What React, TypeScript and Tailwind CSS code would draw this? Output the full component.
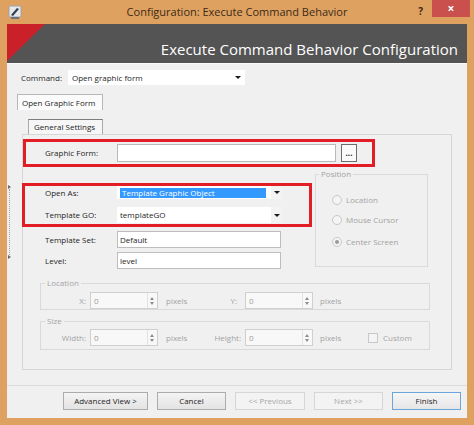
import React from 'react';

const Down = ({ dim = false }: { dim?: boolean }) => (
  <div className={`h-0 w-0 border-x-[3px] border-t-[3px] border-x-transparent ${dim ? 'border-t-[#9a9a9a]' : 'border-t-[#1a1a1a]'}`} />
);

const SpinArrows = () => (
  <div className="flex h-full w-[9px] flex-col items-center justify-center gap-[2px] border-l border-[#e2e2e2]">
    <div className="h-0 w-0 border-x-[2.5px] border-b-[3px] border-x-transparent border-b-[#8c8c8c]" />
    <div className="h-0 w-0 border-x-[2.5px] border-t-[3px] border-x-transparent border-t-[#8c8c8c]" />
  </div>
);

const Spin = () => (
  <div className="flex h-[17px] w-[68px] items-center border border-[#cfcfcf] bg-[#f8f8f8] pr-px">
    <span className="flex-1 pl-[3px] text-[#9c9c9c]">0</span>
    <SpinArrows />
  </div>
);

const Radio = ({ label, checked = false, mt }: { label: string; checked?: boolean; mt: string }) => (
  <div className={`flex h-[12px] items-center pl-[16px] ${mt}`}>
    <div className="flex h-[10px] w-[10px] items-center justify-center rounded-full border border-[#c8c8c8] bg-[#f4f4f4]">
      {checked && <div className="h-[4px] w-[4px] rounded-full bg-[#9a9a9a]" />}
    </div>
    <span className="ml-[4px] text-[#a3a3a3]">{label}</span>
  </div>
);

const Btn = ({ label, w, dim = false, focus = false }: { label: string; w: string; dim?: boolean; focus?: boolean }) => (
  <div
    className={`flex h-[18px] items-center justify-center border ${w} ${
      dim
        ? 'border-[#d6d6d6] bg-[#f3f3f3] text-[#a6a6a6]'
        : focus
          ? 'border-[#6aa6dc] bg-linear-to-b from-[#f6f6f6] to-[#e6e6e6] text-[#1e1e1e]'
          : 'border-[#acacac] bg-linear-to-b from-[#f4f4f4] to-[#e3e3e3] text-[#1e1e1e]'
    }`}
  >
    {label}
  </div>
);

export default function App() {
  return (
    <div className="flex h-[425px] w-[474px] flex-col bg-[#dfa160] font-['Open_Sans',sans-serif] text-[8px] leading-[10px] text-[#1e1e1e]">
      {/* title bar */}
      <div className="grid h-[24px] grid-cols-[1fr_auto_1fr] items-center">
        <div className="pl-[8px]">
          <svg width="14" height="14" viewBox="0 0 14 14">
            <rect x="1" y="1" width="12" height="11" rx="1" fill="#e8e8e8" stroke="#9aa3ad" />
            <path d="M3 10 L9 3 L11 4 L5 11 Z" fill="#2c3e58" />
            <rect x="3" y="12" width="8" height="2" fill="#6b7280" />
          </svg>
        </div>
        <div className="text-[11px] leading-[14px] text-[#3a2a18]">Configuration: Execute Command Behavior</div>
        <div className="flex h-full items-start justify-end">
          <span className="mt-[6px] mr-[9px] text-[10px] font-bold text-[#3a2a18]">?</span>
          <div className="mr-[4px] flex h-[17px] w-[38px] items-center justify-center bg-[#c9504d] text-[12px] font-bold text-white">
            ×
          </div>
        </div>
      </div>

      <div className="mx-[7px] mb-[7px] flex flex-1 flex-col bg-[#f0f0f0]">
        {/* header */}
        <div className="flex h-[40px] border-b border-[#fafafa] bg-[#545454]">
          <div className="h-full w-[38px] bg-[#c9202a] [clip-path:polygon(0_0,100%_0,0_95%)]" />
          <div className="flex flex-1 items-end justify-end pr-[9px] pb-[4px] text-[15px] leading-[20px] text-white">
            Execute Command Behavior Configuration
          </div>
        </div>

        <div className="flex h-[320px]">
          {/* splitter */}
          <div className="flex w-[5px] flex-col items-center">
            <div className="mt-[121px] h-0 w-0 border-y-[2.5px] border-l-[3px] border-y-transparent border-l-[#6b6b6b]" />
            <div className="h-[66px] border-l border-dotted border-[#a0a0a0]" />
            <div className="h-0 w-0 border-y-[2.5px] border-l-[3px] border-y-transparent border-l-[#6b6b6b]" />
          </div>

          <div className="flex flex-1 flex-col">
            {/* command */}
            <div className="mt-[6px] flex h-[15px] items-center">
              <span className="ml-[9px] w-[47px]">Command:</span>
              <div className="flex h-full w-[177px] items-center bg-white pr-[4px]">
                <span className="flex-1 pl-[4px]">Open graphic form</span>
                <Down />
              </div>
            </div>

            <div className="mt-[9px] ml-[5px] flex h-[16px] w-[86px] items-center border border-b-0 border-[#b7b7b7] bg-[#fbfbfb] pl-[4px]">
              Open Graphic Form
            </div>

            <div className="mt-[9px] ml-[16px] flex h-[15px] w-[75px] items-center border border-b-0 border-[#a9a9a9] border-t-[#7d7d7d] bg-[#f6f6f6] pl-[5px]">
              General Settings
            </div>

            {/* pane */}
            <div className="ml-[10px] flex h-[236px] w-[430px] flex-col border border-[#d6d6d6]">
              <div className="mt-[4px] flex h-[28px] w-[352px] items-center border-[3px] border-[#e31d25] pl-[19px]">
                <span className="w-[72px]">Graphic Form:</span>
                <div className="h-[18px] w-[219px] border border-[#b9b9b9] bg-white" />
                <div className="ml-[5px] flex h-[18px] w-[16px] items-center justify-center border border-[#6d6d6d] bg-[#fafafa] font-bold">
                  ...
                </div>
              </div>

              <div className="flex">
                <div className="-ml-px flex w-[290px] flex-col">
                  <div className="mt-[16px] flex h-[44px] flex-col border-[3px] border-[#e31d25] pl-[20px]">
                    <div className="flex h-[13px] items-center">
                      <span className="w-[72px]">Open As:</span>
                      <div className="flex h-full w-[165px] items-center bg-white">
                        <span className="ml-[3px] flex h-[10px] w-[146px] items-center bg-[#3399ff] pl-[2px] text-white">
                          Template Graphic Object
                        </span>
                        <div className="ml-[5px] flex h-full w-[11px] items-center justify-center bg-[#f3f3f3]">
                          <Down />
                        </div>
                      </div>
                    </div>
                    <div className="mt-[8px] flex h-[16px] items-center">
                      <span className="w-[72px]">Template GO:</span>
                      <div className="flex h-full w-[165px] items-center bg-white">
                        <span className="flex-1 pl-[3px]">templateGO</span>
                        <div className="flex h-full w-[11px] items-center justify-center bg-[#f3f3f3]">
                          <Down />
                        </div>
                      </div>
                    </div>
                  </div>
                  <div className="mt-[4px] flex h-[17px] items-center pl-[23px]">
                    <span className="w-[72px]">Template Set:</span>
                    <div className="flex h-full w-[164px] items-center border border-[#bdbdbd] bg-white pl-[2px]">Default</div>
                  </div>
                  <div className="mt-[4px] flex h-[17px] items-center pl-[23px]">
                    <span className="w-[72px]">Level:</span>
                    <div className="flex h-full w-[164px] items-center border border-[#bdbdbd] bg-white pl-[2px]">level</div>
                  </div>
                </div>

                <fieldset className="mt-[2px] ml-[3px] h-[98px] w-[113px] border border-[#dadada]">
                  <legend className="ml-[3px] px-[2px] text-[#a3a3a3]">Position</legend>
                  <Radio label="Location" mt="mt-[15px]" />
                  <Radio label="Mouse Cursor" mt="mt-[8px]" />
                  <Radio label="Center Screen" checked mt="mt-[10px]" />
                </fieldset>
              </div>

              <fieldset className="mt-[9px] ml-[17px] h-[32px] w-[390px] border border-[#dadada] text-[#a3a3a3]">
                <legend className="ml-[4px] px-[2px]">Location</legend>
                <div className="mt-[4px] flex items-center">
                  <span className="w-[45px] text-right">X:</span>
                  <div className="ml-[4px]"><Spin /></div>
                  <span className="ml-[8px] w-[40px]">pixels</span>
                  <span className="w-[31px] text-right">Y:</span>
                  <div className="ml-[8px]"><Spin /></div>
                  <span className="ml-[7px]">pixels</span>
                </div>
              </fieldset>

              <fieldset className="mt-[6px] ml-[17px] h-[34px] w-[390px] border border-[#dadada] text-[#a3a3a3]">
                <legend className="ml-[4px] px-[2px]">Size</legend>
                <div className="mt-[3px] flex items-center">
                  <span className="w-[45px] text-right">Width:</span>
                  <div className="ml-[4px]"><Spin /></div>
                  <span className="ml-[8px] w-[40px]">pixels</span>
                  <span className="w-[35px] text-right">Height:</span>
                  <div className="ml-[4px]"><Spin /></div>
                  <span className="ml-[7px] w-[48px]">pixels</span>
                  <div className="h-[10px] w-[10px] border border-[#c8c8c8] bg-[#f4f4f4]" />
                  <span className="ml-[5px]">Custom</span>
                </div>
              </fieldset>
            </div>
          </div>
        </div>

        <div className="mt-px h-px bg-[#dcdcdc]" />

        <div className="mt-[6px] flex gap-[9px] pl-[56px]">
          <Btn label="Advanced View >" w="w-[85px]" />
          <Btn label="Cancel" w="w-[69px]" />
          <Btn label="<< Previous" w="w-[70px]" dim />
          <Btn label="Next >>" w="w-[69px]" dim />
          <Btn label="Finish" w="w-[69px]" focus />
        </div>
      </div>
    </div>
  );
}
